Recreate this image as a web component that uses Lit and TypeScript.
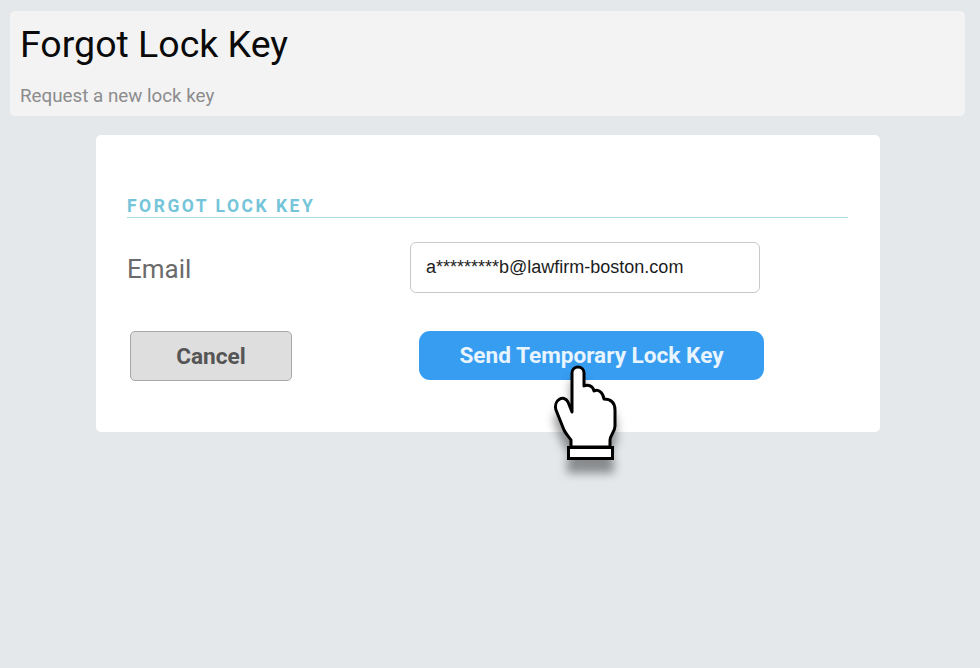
import { LitElement, html, css } from "lit";
import { customElement } from "lit/decorators.js";

@customElement("app-root")
export class AppRoot extends LitElement {
  static styles = css`
    :host {
      display: block;
      width: 980px;
      height: 668px;
      background: #e4e8eb;
      font-family: Roboto, "Liberation Sans", sans-serif;
      overflow: hidden;
    }
    .page {
      display: flex;
      flex-direction: column;
      padding: 11px 15px 0 10px;
    }
    .header {
      height: 105px;
      box-sizing: border-box;
      background: #f3f3f4;
      border-radius: 5px;
      padding: 10px 10px 0;
    }
    h1 {
      margin: 0;
      font-size: 37.5px;
      line-height: 46px;
      font-weight: 400;
      color: #0a0a0a;
    }
    .sub {
      margin-top: 18px;
      font-size: 18.8px;
      line-height: 22px;
      color: #8c8c8c;
    }
    .card {
      width: 784px;
      height: 297px;
      box-sizing: border-box;
      margin: 19px 0 0 86px;
      background: #fff;
      border-radius: 5px;
      padding: 61px 32px 0 31px;
      position: relative;
    }
    .section {
      border-bottom: 1px solid #a9dbe6;
      font-size: 17.5px;
      line-height: 21px;
      font-weight: 700;
      letter-spacing: 2.5px;
      color: #74c5d9;
    }
    .row {
      display: flex;
      align-items: center;
      margin-top: 24px;
    }
    .label {
      width: 283px;
      font-size: 26px;
      line-height: 55px;
      margin-bottom: -4px;
      color: #6b6b6b;
    }
    .input {
      width: 350px;
      height: 51px;
      box-sizing: border-box;
      border: 1px solid #c9c9c9;
      border-radius: 6px;
      padding-left: 15px;
      display: flex;
      align-items: center;
      font-family: "Liberation Sans", Arial, sans-serif;
      font-size: 18px;
      color: #1c1c1c;
      background: #fff;
    }
    .actions {
      display: flex;
      align-items: flex-start;
      margin: 38px 0 0 3px;
      gap: 127px;
    }
    .btn {
      box-sizing: border-box;
      display: flex;
      align-items: center;
      justify-content: center;
      font-size: 22.6px;
      font-weight: 700;
    }
    .cancel {
      width: 162px;
      height: 50px;
      background: #dedede;
      border: 1px solid #a8a8a8;
      border-radius: 5px;
      color: #555;
    }
    .send {
      width: 345px;
      height: 49px;
      background: #379df1;
      border-radius: 11px;
      color: #e8f4fe;
    }
    .hand {
      position: absolute;
      left: 434px;
      top: 215px;
      width: 110px;
      height: 140px;
      filter: drop-shadow(0 13px 5px rgba(0, 0, 0, 0.4));
    }
  `;

  render() {
    return html`
      <div class="page">
        <div class="header">
          <h1>Forgot Lock Key</h1>
          <div class="sub">Request a new lock key</div>
        </div>
        <div class="card">
          <div class="section">FORGOT LOCK KEY</div>
          <div class="row">
            <div class="label">Email</div>
            <div class="input">a*********b@lawfirm-boston.com</div>
          </div>
          <div class="actions">
            <div class="btn cancel">Cancel</div>
            <div class="btn send">Send Temporary Lock Key</div>
          </div>
          <svg class="hand" viewBox="0 0 110 140" aria-hidden="true">
            <path
              d="M42 62 L42 23 C42 15 54 15 54 23 L54 36 C58 34 63 36 64 41 C68 39 73 42 74 49 C80 49 85 52 85 60 L85 76 C85 82 80 85 80 90 L80 97 L41 97 L41 90 C38 86 36 84 34 80 L26 60 C23 50 34 44 38 52 Z"
              fill="#fff"
              stroke="#000"
              stroke-width="3"
              stroke-linejoin="round"
            />
            <rect x="38.5" y="97.5" width="44" height="11" fill="#fff" stroke="#000" stroke-width="3" />
          </svg>
        </div>
      </div>
    `;
  }
}
